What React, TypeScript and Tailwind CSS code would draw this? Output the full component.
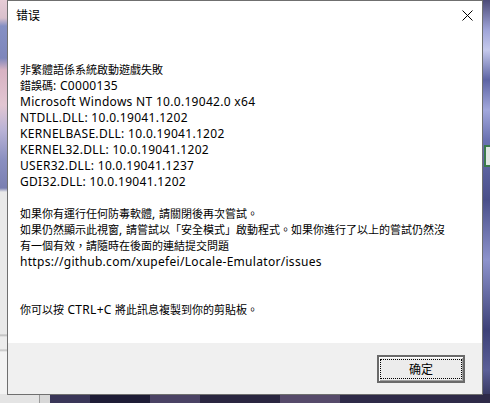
import React from "react";

const LATIN = '"Noto Sans", "Noto Sans CJK TC", sans-serif';
const CJK = '"Noto Sans CJK TC", "Noto Sans CJK SC", sans-serif';

const lines1 = [
  "非繁體語係系統啟動遊戲失敗",
  "錯誤碼: C0000135",
  "Microsoft Windows NT 10.0.19042.0 x64",
  "NTDLL.DLL: 10.0.19041.1202",
  "KERNELBASE.DLL: 10.0.19041.1202",
  "KERNEL32.DLL: 10.0.19041.1202",
  "USER32.DLL: 10.0.19041.1237",
  "GDI32.DLL: 10.0.19041.1202",
];

const lines2 = [
  "如果你有運行任何防毒軟體, 請關閉後再次嘗試。",
  "如果仍然顯示此視窗, 請嘗試以「安全模式」啟動程式。如果你進行了以上的嘗試仍然沒",
  "有一個有效，請隨時在後面的連結提交問題",
  "https://github.com/xupefei/Locale-Emulator/issues",
];

function Mixed({ text }: { text: string }) {
  const parts = text.split(/([\u3000-\u303f\u3400-\u9fff\uff00-\uffef]+)/g);
  return (
    <div className="h-[16px] leading-[16px] whitespace-nowrap">
      {parts.map((p, i) =>
        p === "" ? null : /[\u3000-\u303f\u3400-\u9fff\uff00-\uffef]/.test(p) ? (
          <span key={i} className="text-[11px]" style={{ fontFamily: CJK }}>
            {p}
          </span>
        ) : (
          <span
            key={i}
            className="text-[12px] tracking-[0.3px]"
            style={{ fontFamily: LATIN, whiteSpace: "pre" }}
          >
            {p}
          </span>
        )
      )}
    </div>
  );
}

export default function App() {
  return (
    <div
      className="relative w-[490px] h-[403px] overflow-hidden bg-[#24223e]"
      style={{ fontFamily: LATIN }}
    >
      {/* desktop background pieces */}
      <div className="absolute left-0 top-0 w-[8px] h-[403px] bg-[linear-gradient(to_bottom,#e6ccd6_0px,#d9c0cc_18px,#8590c4_26px,#7e86bb_58px,#d7b2c2_70px,#e2c6d2_105px,#b9b3d6_130px,#8a8fc0_160px,#7a7fb2_188px,#e9e9e9_192px,#e9e9e9_334px,#b8b8b8_335px,#ededed_337px,#ededed_349px,#c0c0c0_350px,#f3f3f3_352px,#f3f3f3_403px)]" />
      <div className="absolute right-0 top-0 w-[8px] h-[403px] bg-[linear-gradient(to_bottom,#4c4b78_0px,#9fa4d8_30px,#c5c9ec_50px,#5d64a4_80px,#a2a8dc_110px,#6b72b2_140px,#4a4f8a_200px,#8d93cc_260px,#3d4178_330px,#5b5f98_370px,#2c2c50_403px)]" />
      <div className="absolute right-0 top-[145px] w-[6px] h-[22px] border-2 border-r-0 border-[#3b7a4b] bg-[#dfe6e2]" />
      <div className="absolute left-0 bottom-0 w-[490px] h-[9px] flex">
        <div className="w-[40px] h-full bg-[#e4e4e4] border-r border-[#9a9a9a]" />
        <div className="w-[10px] h-full bg-[#d8d8d8]" />
        <div className="w-[40px] h-full bg-[#3a3658]" />
        <div className="w-[60px] h-full bg-[#1e1c36]" />
        <div className="w-[50px] h-full bg-[#4a4264]" />
        <div className="w-[80px] h-full bg-[#2a2640]" />
        <div className="w-[60px] h-full bg-[#564a6a]" />
        <div className="flex-1 h-full bg-[#2e2a48]" />
      </div>

      {/* dialog window */}
      <div className="absolute left-[7px] top-0 w-[476px] h-[395px] border border-[#6f6f6f] bg-white flex flex-col text-black">
        {/* title bar */}
        <div className="h-[30px] flex justify-between shrink-0">
          <div
            className="pl-[8px] pt-[6px] text-[12px] leading-[16px]"
            style={{ fontFamily: '"Noto Sans CJK SC", sans-serif' }}
          >
            错误
          </div>
          <svg className="mt-[9px] mr-[9px]" width="11" height="11" viewBox="0 0 11 11">
            <path d="M0.5 0.5 L10.5 10.5 M10.5 0.5 L0.5 10.5" stroke="#000" strokeWidth="1" />
          </svg>
        </div>

        {/* body */}
        <div className="flex-1 pl-[12px] pt-[29px]">
          {lines1.map((l) => (
            <Mixed key={l} text={l} />
          ))}
          <div className="h-[16px]" />
          {lines2.map((l) => (
            <Mixed key={l} text={l} />
          ))}
          <div className="h-[32px]" />
          <Mixed text="你可以按 CTRL+C 將此訊息複製到你的剪貼板。" />
        </div>

        {/* footer */}
        <div className="h-[51px] shrink-0 bg-[#f0f0f0] flex justify-end items-start pt-[12px] pr-[17px]">
          <button className="w-[88px] h-[28px] border-2 border-[#6a6a6a] bg-[#ececec] shadow-[inset_1px_1px_0_#ffffff,inset_-1px_-1px_0_#a0a0a0] px-[1px] py-[2px]">
            <span
              className="flex h-full w-full items-center justify-center border border-dotted border-black text-[12px] leading-[16px]"
              style={{ fontFamily: '"Noto Sans CJK SC", sans-serif' }}
            >
              确定
            </span>
          </button>
        </div>
      </div>
    </div>
  );
}
